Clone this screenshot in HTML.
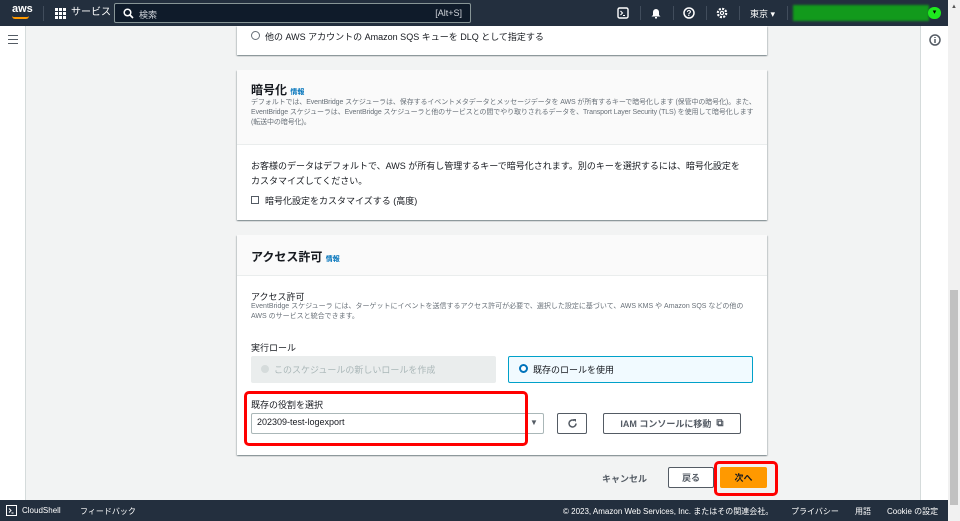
<!DOCTYPE html>
<html><head><meta charset="utf-8"><style>
*{box-sizing:border-box;margin:0;padding:0}
body{width:960px;height:521px;overflow:hidden;background:#f2f3f3;font-family:"Liberation Sans","Noto Sans CJK JP",sans-serif;color:#16191f;position:relative;font-size:9px}
.abs{position:absolute}
.top{left:0;top:0;width:948px;height:26px;background:#232f3e;color:#fff}
.card{background:#fff;left:237px;width:530px;box-shadow:0 1px 1px rgba(0,28,36,.3),1px 1px 1px rgba(0,28,36,.15),-1px 1px 1px rgba(0,28,36,.15)}
.hd{background:#fafafa;border-bottom:1px solid #eaeded}
.small{font-size:7px;color:#687078;line-height:10px}
.link{color:#0073bb;font-size:7px;font-weight:bold}
.btn{border:1px solid #545b64;background:#fff;border-radius:2px;font-weight:bold;display:flex;align-items:center;justify-content:center;font-size:9px;color:#545b64}
.foot{left:0;top:500px;width:948px;height:21px;background:#232f3e;color:#fff;font-size:8px}
</style></head><body>
<div class="abs top">
 <div class="abs" style="left:12px;top:3px;font-weight:bold;font-size:11px">aws</div>
 <div class="abs" style="left:12px;top:16px;width:17px;height:3px;border-bottom:2px solid #f90;border-radius:0 0 8px 8px"></div>
 <div class="abs" style="left:43px;top:6px;width:1px;height:15px;background:#414d5c"></div>
 <svg class="abs" style="left:55px;top:8px" width="11" height="11"><g fill="#fff"><rect x="0" y="0" width="3" height="3"/><rect x="4" y="0" width="3" height="3"/><rect x="8" y="0" width="3" height="3"/><rect x="0" y="4" width="3" height="3"/><rect x="4" y="4" width="3" height="3"/><rect x="8" y="4" width="3" height="3"/><rect x="0" y="8" width="3" height="3"/><rect x="4" y="8" width="3" height="3"/><rect x="8" y="8" width="3" height="3"/></g></svg>
 <div class="abs" style="left:71px;top:7px;font-size:10px;line-height:12px">サービス</div>
 <div class="abs" style="left:114px;top:3px;width:357px;height:20px;border:1px solid #879596;border-radius:2px;background:#0f1b2a">
  <svg class="abs" style="left:8px;top:4px" width="11" height="11" viewBox="0 0 11 11"><circle cx="4.5" cy="4.5" r="3.3" stroke="#fff" stroke-width="1.5" fill="none"/><path d="M7 7l3 3" stroke="#fff" stroke-width="1.6"/></svg>
  <span class="abs" style="left:24px;top:4px;font-size:9px;color:#d1d5db">検索</span>
  <span class="abs" style="right:8px;top:4px;font-size:9px;color:#d1d5db">[Alt+S]</span>
 </div>
 <svg class="abs" style="left:617px;top:7px" width="12" height="12"><rect x="1" y="1" width="10" height="10" rx="1.5" stroke="#fff" stroke-width="1.4" fill="none"/><path d="M3.5 4l2 2-2 2M6 8.5h2" stroke="#fff" stroke-width="1.1" fill="none"/></svg>
 <div class="abs" style="left:640px;top:6px;width:1px;height:14px;background:#414d5c"></div>
 <svg class="abs" style="left:650px;top:6px" width="12" height="13"><path d="M3 9V6a3 3 0 016 0v3l1.5 1.5h-9z" fill="#fff"/><rect x="5" y="11" width="2" height="1.5" fill="#fff"/></svg>
 <div class="abs" style="left:673px;top:6px;width:1px;height:14px;background:#414d5c"></div>
 <svg class="abs" style="left:683px;top:7px" width="12" height="12"><circle cx="6" cy="6" r="5" stroke="#fff" stroke-width="1.5" fill="none"/><text x="6" y="9" font-size="8" font-weight="bold" fill="#fff" text-anchor="middle" font-family="Liberation Sans">?</text></svg>
 <div class="abs" style="left:706px;top:6px;width:1px;height:14px;background:#414d5c"></div>
 <svg class="abs" style="left:716px;top:7px" width="12" height="12"><circle cx="6" cy="6" r="4.2" stroke="#fff" stroke-width="2.2" fill="none" stroke-dasharray="2 1.3"/><circle cx="6" cy="6" r="1.6" stroke="#fff" stroke-width="1.2" fill="none"/></svg>
 <div class="abs" style="left:739px;top:6px;width:1px;height:14px;background:#414d5c"></div>
 <div class="abs" style="left:750px;top:7px;font-size:9px">東京 ▾</div>
 <div class="abs" style="left:787px;top:6px;width:1px;height:14px;background:#414d5c"></div>
 <div class="abs" style="left:793px;top:5px;width:136px;height:16px;background:#129a1c;filter:blur(1px)"></div>
 <div class="abs" style="left:928px;top:7px;width:13px;height:12px;background:#1ee81e;border-radius:6px;font-size:7px;color:#000;text-align:center;line-height:12px">▾</div>
</div>
<div class="abs" style="left:0;top:26px;width:26px;height:474px;background:#fff;border-right:1px solid #d5dbdb"></div>
<div class="abs" style="left:8px;top:35px;width:10px;height:9px;border-top:1.5px solid #545b64;border-bottom:1.5px solid #545b64"><div style="margin-top:2.5px;border-top:1.5px solid #545b64"></div></div>
<div class="abs" style="left:920px;top:26px;width:28px;height:474px;background:#fff;border-left:1px solid #d5dbdb"></div>
<svg class="abs" style="left:929px;top:34px" width="12" height="12"><circle cx="6" cy="6" r="5" stroke="#545b64" stroke-width="1.5" fill="none"/><path d="M6 5v4M6 3v1" stroke="#545b64" stroke-width="1.5"/></svg>
<div class="abs" style="left:948px;top:0;width:12px;height:521px;background:#f1f1f1"></div>
<div class="abs" style="left:950px;top:290px;width:8px;height:215px;background:#c1c1c1"></div>
<div class="abs" style="left:951px;top:4px;font-size:6px;color:#555">▲</div>

<div class="abs card" style="top:26px;height:29px">
 <div class="abs" style="left:14px;top:5px;width:9px;height:9px;border:1px solid #687078;border-radius:50%"></div>
 <div class="abs" style="left:28px;top:4px;font-size:9px;color:#16191f">他の AWS アカウントの Amazon SQS キューを DLQ として指定する</div>
</div>

<div class="abs card" style="top:70px;height:150px">
 <div class="abs hd" style="left:0;top:0;width:530px;height:75px"></div>
 <div class="abs" style="left:14px;top:11px;font-size:12px;font-weight:bold">暗号化 <span class="link">情報</span></div>
 <div class="abs small" style="left:14px;top:28px;width:508px;letter-spacing:-0.1px">デフォルトでは、EventBridge スケジューラは、保存するイベントメタデータとメッセージデータを AWS が所有するキーで暗号化します (保管中の暗号化)。また、EventBridge スケジューラは、EventBridge スケジューラと他のサービスとの間でやり取りされるデータを、Transport Layer Security (TLS) を使用して暗号化します (転送中の暗号化)。</div>
 <div class="abs" style="left:14px;top:89px;width:496px;font-size:9px;line-height:15px">お客様のデータはデフォルトで、AWS が所有し管理するキーで暗号化されます。別のキーを選択するには、暗号化設定をカスタマイズしてください。</div>
 <div class="abs" style="left:14px;top:126px;width:8px;height:8px;border:1px solid #545b64"></div>
 <div class="abs" style="left:28px;top:124px;font-size:9px">暗号化設定をカスタマイズする (高度)</div>
</div>

<div class="abs card" style="top:235px;height:220px">
 <div class="abs hd" style="left:0;top:0;width:530px;height:41px"></div>
 <div class="abs" style="left:14px;top:13px;font-size:12px;font-weight:bold">アクセス許可 <span class="link">情報</span></div>
 <div class="abs" style="left:14px;top:55px;font-size:9px">アクセス許可</div>
 <div class="abs small" style="left:14px;top:67px;width:500px">EventBridge スケジューラ には、ターゲットにイベントを送信するアクセス許可が必要で、選択した設定に基づいて、AWS KMS や Amazon SQS などの他の AWS のサービスと統合できます。</div>
 <div class="abs" style="left:14px;top:106px;font-size:9px">実行ロール</div>
 <div class="abs" style="left:14px;top:121px;width:245px;height:27px;background:#eaeded;border-radius:2px"></div>
 <div class="abs" style="left:24px;top:130px;width:8px;height:8px;background:#d5dbdb;border-radius:50%"></div>
 <div class="abs" style="left:37px;top:128px;font-size:9px;color:#aab7b8">このスケジュールの新しいロールを作成</div>
 <div class="abs" style="left:271px;top:121px;width:245px;height:27px;background:#f1faff;border:1px solid #00a1c9;border-radius:2px"></div>
 <div class="abs" style="left:282px;top:129px;width:9px;height:9px;border:2.5px solid #0073bb;border-radius:50%;background:#fff"></div>
 <div class="abs" style="left:296px;top:128px;font-size:9px">既存のロールを使用</div>
 <div class="abs" style="left:14px;top:163px;font-size:9px">既存の役割を選択</div>
 <div class="abs" style="left:14px;top:178px;width:293px;height:21px;border:1px solid #aab7b8;border-radius:2px"></div>
 <div class="abs" style="left:20px;top:182px;font-size:9px">202309-test-logexport</div>
 <div class="abs" style="left:293px;top:183px;font-size:8px;color:#545b64">▼</div>
 <div class="abs btn" style="left:320px;top:178px;width:30px;height:21px">
  <svg width="11" height="11"><path d="M9 5.5A3.5 3.5 0 1 1 7.5 2.6" stroke="#545b64" stroke-width="1.5" fill="none"/><path d="M6 1h3v3z" fill="#545b64"/></svg></div>
 <div class="abs btn" style="left:366px;top:178px;width:138px;height:21px">IAM コンソールに移動 <span style="margin-left:5px;font-size:10px">⧉</span></div>
</div>
<div class="abs" style="left:244px;top:391px;width:284px;height:55px;border:3px solid #f00;border-radius:5px"></div>

<div class="abs" style="left:602px;top:472px;font-size:9px;font-weight:bold;color:#545b64">キャンセル</div>
<div class="abs btn" style="left:668px;top:467px;width:46px;height:21px">戻る</div>
<div class="abs" style="left:720px;top:467px;width:47px;height:21px;background:#ff9900;border-radius:2px;font-weight:bold;font-size:9px;display:flex;align-items:center;justify-content:center">次へ</div>
<div class="abs" style="left:714px;top:461px;width:64px;height:35px;border:3px solid #f00;border-radius:5px"></div>

<div class="abs foot">
 <svg class="abs" style="left:6px;top:5px" width="11" height="11"><rect x=".5" y=".5" width="10" height="10" stroke="#fff" fill="none"/><path d="M3 3.5l2 2-2 2M5.5 8h2" stroke="#fff" fill="none"/></svg>
 <div class="abs" style="left:22px;top:6px">CloudShell</div>
 <div class="abs" style="left:80px;top:6px">フィードバック</div>
 <div class="abs" style="left:563px;top:6px">© 2023, Amazon Web Services, Inc. またはその関連会社。</div>
 <div class="abs" style="left:791px;top:6px">プライバシー</div>
 <div class="abs" style="left:855px;top:6px">用語</div>
 <div class="abs" style="left:887px;top:6px">Cookie の設定</div>
</div>
</body></html>
